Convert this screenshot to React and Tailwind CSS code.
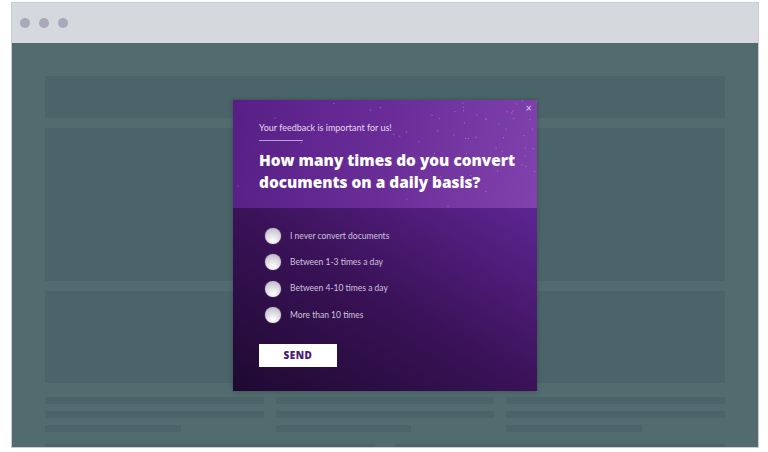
import React from "react";

const options = [
  "I never convert documents",
  "Between 1-3 times a day",
  "Between 4-10 times a day",
  "More than 10 times",
];

function Speckles() {
  const pts = [];
  let s = 7;
  const rnd = () => {
    s = (s * 9301 + 49297) % 233280;
    return s / 233280;
  };
  for (let i = 0; i < 260; i++) {
    const x = rnd();
    const y = rnd();
    if (rnd() > Math.pow(x, 3) * (1 - y) * 1.2 + 0.04) continue;
    pts.push([x * 304, y * 108]);
  }
  return (
    <svg className="absolute left-0 top-0" width="304" height="108" viewBox="0 0 304 108">
      {pts.map(([x, y], i) => (
        <rect key={i} x={x} y={y} width="1" height="1" fill="#c9a9e6" opacity="0.6" />
      ))}
    </svg>
  );
}

export default function App() {
  return (
    <div className="relative w-[768px] h-[452px] bg-white overflow-hidden" style={{ fontFamily: "Lato, 'Open Sans', sans-serif" }}>
      <div className="ml-[11px] mt-[2px] w-[748px] h-[446px] flex flex-col border border-[#c9ccd6]">
        <div className="h-[40px] bg-[#d5d8dd] flex items-center gap-[9px] pl-[8px] shrink-0">
          <span className="w-[10px] h-[10px] rounded-full bg-[#aaa7b9]" />
          <span className="w-[10px] h-[10px] rounded-full bg-[#aaa7b9]" />
          <span className="w-[10px] h-[10px] rounded-full bg-[#aaa7b9]" />
        </div>
        <div className="flex-1 bg-[#516b6e] px-[33px] pt-[33px] flex flex-col overflow-hidden">
          <div className="h-[42px] bg-[#4b6469] shrink-0" />
          <div className="h-[153px] bg-[#4b6469] mt-[10px] shrink-0" />
          <div className="h-[92px] bg-[#4b6469] mt-[10px] shrink-0" />
          <div className="grid grid-cols-3 gap-[12px] mt-[14px]">
            {[0, 1, 2].map((c) => (
              <div key={c} className="flex flex-col gap-[7px]">
                <div className="h-[7px] bg-[#4b6469]" />
                <div className="h-[7px] bg-[#4b6469]" />
                <div className="h-[7px] w-[62%] bg-[#4b6469]" />
              </div>
            ))}
          </div>
          <div className="grid grid-cols-2 gap-[20px] mt-[12px]">
            <div className="h-[7px] bg-[#4b6469]" />
            <div className="h-[7px] bg-[#4b6469]" />
          </div>
        </div>
      </div>

      <div className="absolute left-[233px] top-[100px] w-[304px] h-[291px] flex flex-col shadow-[0_0_4px_rgba(0,0,0,0.25)]">
        <div className="relative h-[108px] bg-[linear-gradient(100deg,#571f86_0%,#6a2d98_50%,#8142ad_100%)] pl-[26px] pt-[22px] overflow-hidden">
          <Speckles />
          <button className="absolute right-[5px] top-[2px] text-[#d8cde6] text-[11px] leading-none">×</button>
          <div className="text-[9px] text-[#e4d8f0] leading-[12px]">Your feedback is important for us!</div>
          <div className="w-[44px] h-px bg-[#b9a2d2] mt-[6px]" />
          <div
            className="mt-[9px] text-white font-extrabold text-[15.4px] leading-[22px]"
            style={{ fontFamily: "'Open Sans', Lato, sans-serif" }}
          >
            How many times do you convert
            <br />
            documents on a daily basis?
          </div>
        </div>
        <div className="flex-1 bg-[linear-gradient(to_top_right,#1e0930_0%,#3a1258_50%,#5e2593_100%)] pl-[26px] pt-[20px]">
          <div className="flex flex-col gap-[10.3px] pl-[6px]">
            {options.map((o) => (
              <label key={o} className="flex items-center gap-[9px] h-[16px]">
                <span className="w-[16px] h-[16px] rounded-full bg-[radial-gradient(circle_at_50%_80%,#ffffff_0%,#e3e1e8_40%,#b4b0bd_100%)] shadow-[0_0_1px_rgba(255,255,255,0.6)]" />
                <span className="text-[8.5px] text-[#cfc3dd]">{o}</span>
              </label>
            ))}
          </div>
          <button
            className="mt-[21px] w-[78px] h-[23px] bg-white text-[#4b1c70] text-[10px] font-extrabold tracking-[0.5px] flex items-center justify-center"
            style={{ fontFamily: "'Open Sans', Lato, sans-serif" }}
          >
            SEND
          </button>
        </div>
      </div>
    </div>
  );
}
